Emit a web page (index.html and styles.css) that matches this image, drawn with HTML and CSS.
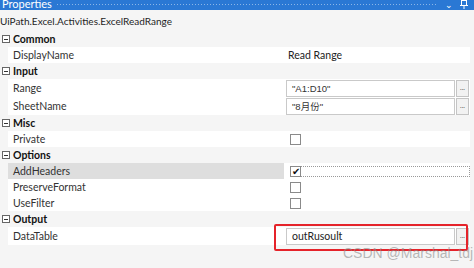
FILE: index.html
```html
<!DOCTYPE html>
<html lang="en">
<head>
  <meta charset="UTF-8">
  <title>Properties</title>
  <link rel="stylesheet" href="styles.css">
</head>
<body>
  <div class="panel">
    <div class="titlebar">
      <span class="title">Properties</span>
      <span class="grip"></span>
      <span class="chev">&#8964;</span>
      <svg class="pin" width="8" height="9" viewBox="0 0 8 9">
        <rect x="1.5" y="0.5" width="5" height="5" fill="none" stroke="#fff"/>
        <line x1="0" y1="5.5" x2="8" y2="5.5" stroke="#fff"/>
        <line x1="4" y1="6" x2="4" y2="9" stroke="#fff"/>
      </svg>
    </div>

    <div class="subtitle">UiPath.Excel.Activities.ExcelReadRange</div>

    <div class="grid">
      <div class="cat"><span class="toggle"></span>Common</div>
      <div class="row">
        <div class="name">DisplayName</div>
        <div class="value"><span class="plain">Read Range</span></div>
      </div>

      <div class="cat"><span class="toggle"></span>Input</div>
      <div class="row tall">
        <div class="name">Range</div>
        <div class="value"><span class="field">"A1:D10"</span><span class="more">...</span></div>
      </div>
      <div class="row tall">
        <div class="name">SheetName</div>
        <div class="value"><span class="field">"8月份"</span><span class="more">...</span></div>
      </div>

      <div class="cat"><span class="toggle"></span>Misc</div>
      <div class="row">
        <div class="name">Private</div>
        <div class="value"><span class="check"></span></div>
      </div>

      <div class="cat"><span class="toggle"></span>Options</div>
      <div class="row selected">
        <div class="name">AddHeaders</div>
        <div class="value"><span class="focus"><span class="check on">&#10004;</span></span></div>
      </div>
      <div class="row">
        <div class="name">PreserveFormat</div>
        <div class="value"><span class="check"></span></div>
      </div>
      <div class="row">
        <div class="name">UseFilter</div>
        <div class="value"><span class="check"></span></div>
      </div>

      <div class="cat"><span class="toggle"></span>Output</div>
      <div class="row tall">
        <div class="name">DataTable</div>
        <div class="value"><span class="field dark">outRusoult</span><span class="more">...</span></div>
      </div>
    </div>

    <div class="highlight"></div>
    <div class="watermark">CSDN @Marshal_tdj</div>
  </div>
</body>
</html>
```

FILE: styles.css
```css
body {
  margin: 0;
  font-family: Lato, "Noto Sans CJK SC", sans-serif;
  background: #f5f5f5;
  overflow: hidden;
}

.panel {
  position: relative;
  width: 474px;
  height: 268px;
  background: #f5f5f5;
  color: #2b2b2b;
}

.titlebar {
  height: 10px;
  background: #2a78d4;
  color: #fff;
  display: flex;
  align-items: flex-end;
  overflow: hidden;
  padding: 0 6px 0 2px;
  gap: 4px;
}

.title {
  font-size: 11px;
  line-height: 14px;
  margin-bottom: -1px;
}

.grip {
  flex: 1;
  height: 4px;
  margin-bottom: 3px;
  background-image: radial-gradient(circle, rgba(255,255,255,0.45) 0.6px, transparent 0.8px);
  background-size: 3px 3px;
}

.chev {
  font-size: 9px;
  line-height: 10px;
  margin: 0 3px 0 4px;
}

.pin {
  margin-bottom: 1px;
}

.subtitle {
  height: 21px;
  line-height: 22px;
  font-size: 10px;
  color: #1e1e1e;
}

.cat {
  height: 16px;
  display: flex;
  align-items: center;
  font-size: 10.5px;
  font-weight: bold;
  color: #111;
  padding-left: 2px;
  gap: 3px;
}

.toggle {
  position: relative;
  width: 6px;
  height: 6px;
  border: 1px solid #666;
  background: #fff;
}

.toggle::after {
  content: "";
  position: absolute;
  left: 1px;
  top: 2.5px;
  width: 4px;
  height: 1px;
  background: #333;
}

.row {
  height: 16px;
  display: flex;
  margin-left: 8px;
  margin-right: 4px;
  background: #fff;
  font-size: 10.5px;
}

.row.tall {
  height: 18px;
}

.name {
  flex: 0 0 276px;
  box-sizing: border-box;
  padding-left: 5px;
  display: flex;
  align-items: center;
  color: #333;
}

.selected .name {
  background: #dedede;
}

.value {
  flex: 1;
  display: flex;
  align-items: center;
  padding-left: 2px;
  color: #222;
}

.plain {
  padding-left: 2px;
}

.field {
  width: 162px;
  height: 15px;
  border: 1px solid #c9c9c9;
  padding-left: 5px;
  font-family: "Liberation Sans", "Noto Sans CJK SC", sans-serif;
  font-size: 9.5px;
  line-height: 15px;
  color: #333;
}

.field.dark {
  font-family: Lato, sans-serif;
  font-size: 10.5px;
  color: #222;
}

.more {
  width: 11px;
  height: 15px;
  margin-left: 1px;
  border: 1px solid #c4c4c4;
  background: #f2f2f2;
  font-size: 7px;
  line-height: 13px;
  text-align: center;
  color: #555;
}

.check {
  width: 9px;
  height: 9px;
  margin-left: 4px;
  border: 1px solid #8a8a8a;
  background: #fff;
  font-size: 10px;
  line-height: 9px;
  text-align: center;
  color: #111;
}

.focus {
  flex: 1;
  display: flex;
  align-items: center;
  height: 9px;
  border: 1px dotted #999;
  border-left: none;
  margin-left: 4px;
}

.focus .check {
  margin-left: 0;
}

.highlight {
  position: absolute;
  left: 274px;
  top: 224px;
  width: 190px;
  height: 23px;
  border: 2px solid #e5232a;
  border-radius: 2px;
}

.watermark {
  position: absolute;
  left: 343px;
  top: 245px;
  font-family: "Liberation Sans", sans-serif;
  font-size: 14px;
  color: rgba(140, 140, 140, 0.6);
}
```
